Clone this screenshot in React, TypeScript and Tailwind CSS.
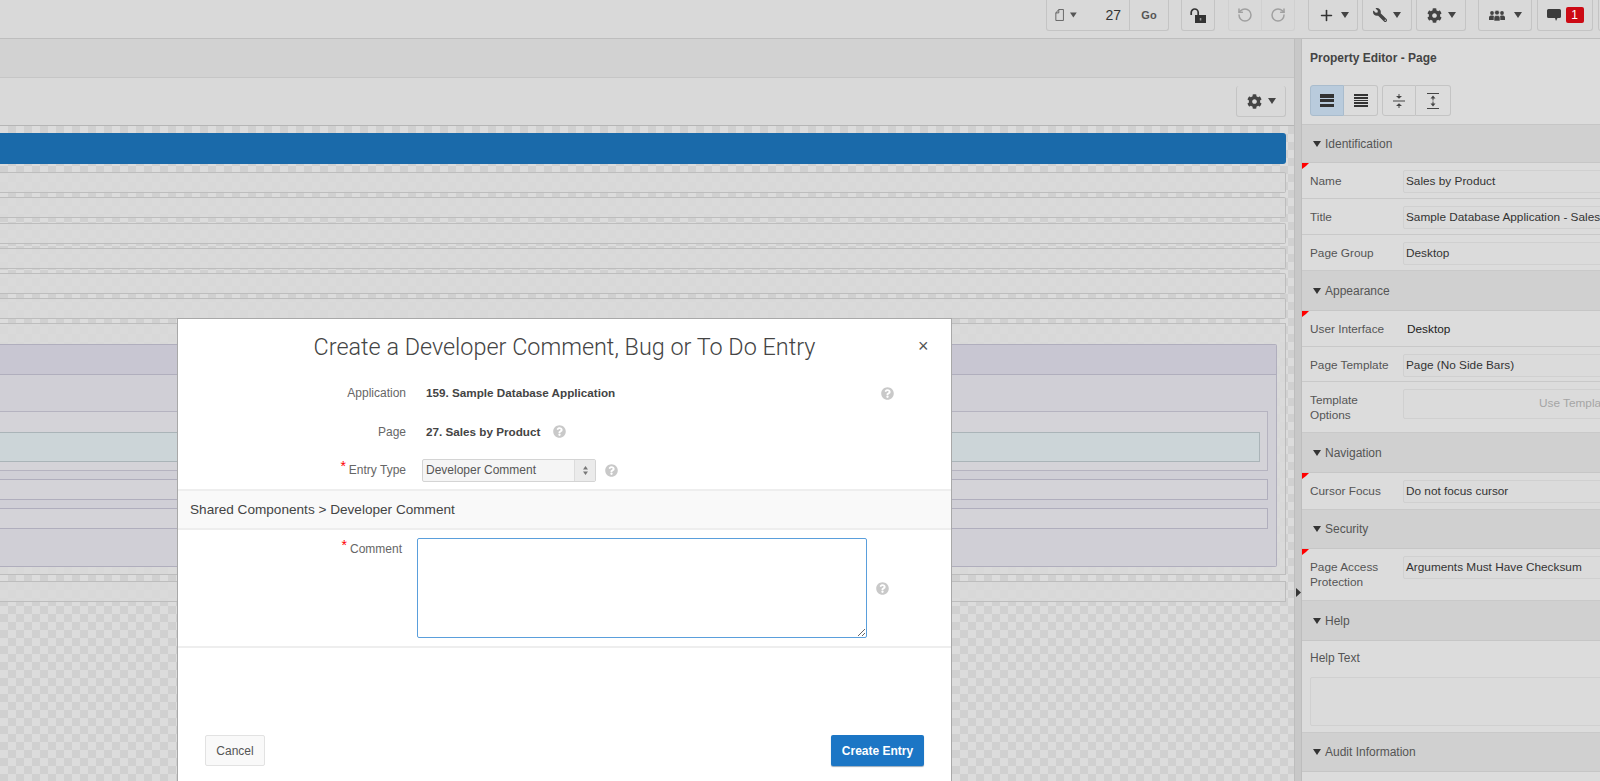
import { ReactNode } from "react"
import { Plus, RotateCcw, RotateCw } from "lucide-react"
import { FaCog, FaQuestionCircle, FaWrench } from "react-icons/fa"

type PropertyRow = {
  label: string
  value?: string
  height: string
  kind?: "plain" | "button" | "area"
  flag?: boolean
}

type PropertyGroup = {
  title: string
  height: string
  rows: PropertyRow[]
}

const groups: PropertyGroup[] = [
  {
    title: "Identification",
    height: "h-[38px]",
    rows: [
      { label: "Name", value: "Sales by Product", height: "h-[36px]", flag: true },
      { label: "Title", value: "Sample Database Application - Sales by Product", height: "h-[36px]" },
      { label: "Page Group", value: "Desktop", height: "h-[36px]" },
    ],
  },
  {
    title: "Appearance",
    height: "h-[40px]",
    rows: [
      { label: "User Interface", value: "Desktop", height: "h-[36px]", kind: "plain", flag: true },
      { label: "Page Template", value: "Page (No Side Bars)", height: "h-[35px]" },
      { label: "Template Options", value: "Use Template Defaults", height: "h-[51px]", kind: "button" },
    ],
  },
  {
    title: "Navigation",
    height: "h-[40px]",
    rows: [{ label: "Cursor Focus", value: "Do not focus cursor", height: "h-[37px]", flag: true }],
  },
  {
    title: "Security",
    height: "h-[39px]",
    rows: [{ label: "Page Access Protection", value: "Arguments Must Have Checksum", height: "h-[52px]", flag: true }],
  },
  {
    title: "Help",
    height: "h-[40px]",
    rows: [{ label: "Help Text", height: "h-[92px]", kind: "area" }],
  },
  { title: "Audit Information", height: "h-[39px]", rows: [] },
]

function Caret({ className = "" }: { className?: string }) {
  return (
    <svg width="8" height="6" viewBox="0 0 8 6" className={className}>
      <path d="M0 0h8L4 6z" fill="currentColor" />
    </svg>
  )
}

function ToolButton({ children, className = "" }: { children: ReactNode; className?: string }) {
  return (
    <div
      className={`flex h-[31px] items-center justify-center border border-t-0 border-[#c4c4c4] text-[#444] rounded-b-[3px] ${className}`}
    >
      {children}
    </div>
  )
}

function PageIcon() {
  return (
    <svg width="11" height="14" viewBox="0 0 11 14" fill="none" stroke="#555" strokeWidth="1">
      <path d="M1 4.500 4.500 .5H10v13H1zM4.500 .5V4.500H1" />
    </svg>
  )
}

function LockIcon() {
  return (
    <svg width="16" height="15" viewBox="0 0 16 15" fill="#333">
      <path d="M5 7h11v8H5z" />
      <path d="M1.200 7V4.500a3.500 3.500 0 0 1 7 0V7" fill="none" stroke="#333" strokeWidth="1.700" />
      <path d="M9.800 10h1.500v2.500H9.800z" fill="#999" />
    </svg>
  )
}

function PeopleIcon() {
  return (
    <svg width="16" height="11" viewBox="0 0 16 11" fill="#444">
      <circle cx="3" cy="3" r="1.900" />
      <circle cx="13" cy="3" r="1.900" />
      <path d="M0 10V7.500C0 6 1.200 5.500 3 5.500S5 6 5 7v3zM11 10V7c0-1 .3-1.500 2-1.500S16 6 16 7.500V10z" />
      <circle cx="8" cy="2.600" r="2.400" stroke="#d9d9d9" strokeWidth=".6" />
      <path d="M5 11V7.800C5 6 6.300 5.500 8 5.500s3 .5 3 2.300V11z" stroke="#d9d9d9" strokeWidth=".6" />
    </svg>
  )
}

function CommentIcon() {
  return (
    <svg width="14" height="12" viewBox="0 0 14 12" fill="#3c3c3c">
      <path d="M1.500 0h11A1.500 1.500 0 0 1 14 1.500v6A1.500 1.500 0 0 1 12.500 9H10.500L9 12 8 9H1.500A1.500 1.500 0 0 1 0 7.500v-6A1.500 1.500 0 0 1 1.500 0z" />
    </svg>
  )
}

function Bars({ count, thick }: { count: number; thick: number }) {
  return (
    <div className="flex h-[13px] w-[14px] flex-col justify-between">
      {Array.from({ length: count }).map((_, i) => (
        <div key={i} className="bg-[#333]" style={{ height: thick }} />
      ))}
    </div>
  )
}

function CollapseIcon() {
  return (
    <svg width="14" height="16" viewBox="0 0 14 16" fill="#444">
      <path d="M1 7.500h12v1H1z" />
      <path d="M6.500 1h1v2H10L7 5.800 4 3h2.500zM6.500 15h1v-2H10l-3-2.800L4 13h2.500z" />
    </svg>
  )
}

function ExpandIcon() {
  return (
    <svg width="14" height="16" viewBox="0 0 14 16" fill="#444">
      <path d="M1 0h12v1H1zM1 15h12v1H1z" />
      <path d="M7 2.500 9.500 5.500h-2v2h-1v-2h-2zM7 13.500 4.500 10.500h2v-2h1v2h2z" />
    </svg>
  )
}

function HelpIcon({ className = "" }: { className?: string }) {
  return <FaQuestionCircle className={`text-[#c9c9c9] ${className}`} size={13} />
}

function Required() {
  return <span className="relative -top-[3px] mr-[3px] text-[14px] leading-none text-[#f00]">*</span>
}

function CanvasRow() {
  return <div className="h-[21px] rounded-r-[2px] border border-l-0 border-[#bdbdbd] bg-[#d9d9d9]/80" />
}

function Canvas() {
  return (
    <div className="flex min-h-0 flex-1 flex-col gap-[4.2px] border-t border-[#b5b5b5] bg-[repeating-conic-gradient(#d0d0d0_0_25%,#dcdcdc_0_50%)] bg-size-[16px_16px] pr-2 pt-[7px]">
      <div className="mb-1 h-[31px] rounded-r-[3px] bg-[#1a6aaa]" />
      <CanvasRow />
      <CanvasRow />
      <CanvasRow />
      <CanvasRow />
      <CanvasRow />
      <CanvasRow />
      <div className="h-[252px] border border-l-0 border-[#bdbdbd] bg-[#d9d9d9]/80 pb-2 pr-2 pt-5">
        <div className="h-[223px] rounded-r-[2px] border border-l-0 border-[#b0aebd] bg-[#d0cfd6]">
          <div className="h-[30px] border-b border-[#b0aebd] bg-[#c8c6d2]" />
          <div className="pr-2 pt-[36px]">
            <div className="h-[60px] border border-l-0 border-[#b5b3c0] bg-[#d4d3d8] pr-[7px] pt-5">
              <div className="h-[30px] border border-l-0 border-[#aab4b8] bg-[#ccd5d8]" />
            </div>
            <div className="mt-2 h-[21px] border border-l-0 border-[#b0aebd] bg-[#d4d3d8]" />
            <div className="mt-2 h-[21px] border border-l-0 border-[#b0aebd] bg-[#d4d3d8]" />
          </div>
        </div>
      </div>
      <div className="mt-px h-[21px] border border-l-0 border-[#bdbdbd] bg-[#d9d9d9]/80" />
    </div>
  )
}

function PropertyEditor() {
  return (
    <div className="min-w-0 flex-1 overflow-hidden bg-[#dcdcdc] text-[12px]">
      <div className="h-[86px] border-b border-[#c6c6c6] px-2">
        <div className="pt-3 font-bold leading-[14px] text-[#444]">Property Editor - Page</div>
        <div className="mt-[20px] flex gap-1">
          <div className="flex">
            <div className="flex h-[31px] w-[34px] items-center justify-center rounded-l-[3px] border border-[#a9bccd] bg-[#b9cbdc]">
              <Bars count={3} thick={3.5} />
            </div>
            <div className="flex h-[31px] w-[34px] items-center justify-center rounded-r-[3px] border border-l-0 border-[#c4c4c4]">
              <Bars count={5} thick={1.8} />
            </div>
          </div>
          <div className="flex">
            <div className="flex h-[31px] w-[34px] items-center justify-center rounded-l-[3px] border border-[#c4c4c4]">
              <CollapseIcon />
            </div>
            <div className="flex h-[31px] w-[35px] items-center justify-center rounded-r-[3px] border border-l-0 border-[#c4c4c4]">
              <ExpandIcon />
            </div>
          </div>
        </div>
      </div>
      {groups.map((group) => (
        <div key={group.title}>
          <div
            className={`flex items-center gap-1 border-b border-[#c6c6c6] bg-[#d0d0d0] pl-[11px] text-[#555] ${group.height}`}
          >
            <Caret className="text-[#333]" />
            {group.title}
          </div>
          {group.rows.map((row) => (
            <div key={row.label} className={`relative border-b border-[#c9c9c9] pl-2 ${row.height}`}>
              {row.flag && (
                <div className="absolute left-0 top-0 h-0 w-0 border-l-[4px] border-t-[3px] border-l-[#f00] border-t-[#f00] border-r-[3px] border-b-[3px] border-r-transparent border-b-transparent" />
              )}
              {row.kind === "area" ? (
                <div>
                  <div className="pt-[10px] leading-[14px] text-[#555]">{row.label}</div>
                  <div className="mt-[12px] h-[49px] w-[400px] rounded-[2px] border border-[#d0d0d0] bg-[#dbdbdb]" />
                </div>
              ) : (
                <div className="flex pt-[7px] text-[11.8px]">
                  <div className="mr-[13px] w-[80px] shrink-0 pt-1 leading-[15px] text-[#555]">{row.label}</div>
                  {row.kind === "plain" ? (
                    <div className="pl-1 pt-1 leading-[15px] text-[#222]">{row.value}</div>
                  ) : row.kind === "button" ? (
                    <div className="flex h-[30px] w-[300px] shrink-0 items-center whitespace-nowrap rounded-[2px] border border-[#d0d0d0] bg-[#dbdbdb] pl-[135px] text-[#a5a5a5]">
                      {row.value}
                    </div>
                  ) : (
                    <div className="flex h-[23px] w-[300px] shrink-0 items-center whitespace-nowrap rounded-[2px] border border-[#d0d0d0] bg-[#dbdbdb] pl-[2px] text-[#333]">
                      {row.value}
                    </div>
                  )}
                </div>
              )}
            </div>
          ))}
        </div>
      ))}
    </div>
  )
}

function CommentDialog() {
  return (
    <div className="absolute left-[178px] top-[319px] flex h-[462px] w-[773px] flex-col bg-white text-[12px] shadow-[0_0_0_1px_#a8a8a8]">
      <div className="relative h-[55px] pt-[13px] text-center font-['Roboto',sans-serif] text-[23.400px] font-light leading-[30px] text-[#444]">
        Create a Developer Comment, Bug or To Do Entry
        <span className="absolute left-[740px] top-[17px] font-['Liberation_Sans',sans-serif] text-[18px] font-normal leading-[20px] text-[#555]">
          ×
        </span>
      </div>
      <div className="flex h-[38px] items-center">
        <div className="w-[228px] text-right text-[#666]">Application</div>
        <div className="ml-5 w-[455px] text-[11.700px] font-bold text-[#444]">159. Sample Database Application</div>
        <HelpIcon />
      </div>
      <div className="flex h-[39px] items-center">
        <div className="w-[228px] text-right text-[#666]">Page</div>
        <div className="ml-5 text-[11.700px] font-bold text-[#444]">27. Sales by Product</div>
        <HelpIcon className="ml-[13px]" />
      </div>
      <div className="flex h-[38px] items-center">
        <div className="w-[228px] text-right text-[#666]">
          <Required />
          Entry Type
        </div>
        <div className="ml-4 flex h-[23px] w-[174px] items-center rounded-[2px] border border-[#d4d4d4] bg-[#f5f5f5] pl-[3px] text-[#555]">
          <span className="flex-1">Developer Comment</span>
          <span className="flex h-full w-[21px] items-center justify-center border-l border-[#dcdcdc] bg-[#ebebeb]">
            <svg width="5" height="9" viewBox="0 0 5 9" fill="#777">
              <path d="M2.500 0 5 3.500H0zM2.500 9 0 5.500h5z" />
            </svg>
          </span>
        </div>
        <HelpIcon className="ml-[9px]" />
      </div>
      <div className="flex h-[41px] items-center border-y-2 border-[#eeeeee] bg-[#f9f9f9] pl-3 pt-px text-[13.600px] text-[#444]">
        Shared Components &gt; Developer Comment
      </div>
      <div className="flex h-[118px] border-b-2 border-[#eeeeee] pt-[8px]">
        <div className="w-[224px] pt-[3px] text-right leading-[15px] text-[#666]">
          <Required />
          Comment
        </div>
        <textarea className="ml-[15px] block h-[100px] w-[450px] rounded-[2px] border border-[#5a9fdc] bg-white" />
        <HelpIcon className="ml-[9px] mt-[44px]" />
      </div>
      <div className="flex flex-1 items-end justify-between px-[27px] pb-[15px]">
        <button className="h-[31px] w-[60px] rounded-[2px] border border-[#e2e2e2] bg-[#f9f9f9] text-[#555]">Cancel</button>
        <button className="h-[31px] w-[93px] rounded-[2px] bg-[#1c76c5] font-bold text-white shadow-[0_1px_1px_#9ab]">
          Create Entry
        </button>
      </div>
    </div>
  )
}

export default function App() {
  return (
    <div className="relative flex h-[781px] w-full flex-col overflow-hidden bg-[#d9d9d9] font-['Liberation_Sans',Arial,sans-serif]">
      <div className="flex h-[39px] shrink-0 justify-end border-b border-[#bebebe] text-[12px]">
        <div className="-mr-[40px] flex">
          <div className="mr-3 flex">
            <ToolButton className="w-[84px] gap-[6px] rounded-br-none pr-[52px] pl-2 relative">
              <PageIcon />
              <Caret className="text-[#555]" />
              <span className="absolute right-2 text-[14px] text-[#333]">27</span>
            </ToolButton>
            <ToolButton className="w-[39px] border-l-0 rounded-bl-none font-bold text-[11px] text-[#555]">Go</ToolButton>
          </div>
          <ToolButton className="mr-[13px] w-[34px]">
            <LockIcon />
          </ToolButton>
          <div className="mr-[13px] flex">
            <ToolButton className="w-[34px] rounded-br-none border-[#d0d0d0] text-[#a0a0a0]">
              <RotateCcw size={16} strokeWidth={2.25} />
            </ToolButton>
            <ToolButton className="w-[33px] border-l-0 rounded-bl-none border-[#d0d0d0] text-[#a0a0a0]">
              <RotateCw size={16} strokeWidth={2.25} />
            </ToolButton>
          </div>
          <ToolButton className="mr-1 w-[50px] gap-[6px]">
            <Plus size={17} strokeWidth={2.25} className="text-[#333]" />
            <Caret />
          </ToolButton>
          <ToolButton className="mr-1 w-[50px] gap-[6px]">
            <FaWrench size={14} className="-scale-x-100" />
            <Caret />
          </ToolButton>
          <ToolButton className="mr-3 w-[50px] gap-[6px]">
            <FaCog size={15} />
            <Caret />
          </ToolButton>
          <ToolButton className="mr-[5px] w-[54px] gap-[9px]">
            <PeopleIcon />
            <Caret />
          </ToolButton>
          <ToolButton className="mr-[5px] w-[56px] gap-[5px]">
            <CommentIcon />
            <span className="flex h-[16px] w-[18px] items-center justify-center rounded-[2px] bg-[#cc0a14] text-[12px] text-white">1</span>
          </ToolButton>
          <ToolButton className="w-[42px]">{null}</ToolButton>
        </div>
      </div>
      <div className="flex min-h-0 flex-1">
        <div className="flex w-[1294px] shrink-0 flex-col">
          <div className="h-[39px] shrink-0 border-b border-[#c6c6c6] bg-[#d2d2d2]" />
          <div className="flex h-[47px] shrink-0 justify-end pr-2 pt-2">
            <ToolButton className="w-[50px] gap-[6px] rounded-[3px] border-t">
              <FaCog size={15} />
              <Caret />
            </ToolButton>
          </div>
          <Canvas />
        </div>
        <div className="flex w-2 shrink-0 items-start border-x border-[#bdbdbd] bg-[#c8c8c8] pt-[549px]">
          <svg width="5" height="9" viewBox="0 0 5 9" fill="#333" className="ml-[1px]">
            <path d="M0 0l5 4.500L0 9z" />
          </svg>
        </div>
        <PropertyEditor />
      </div>
      <CommentDialog />
    </div>
  )
}
